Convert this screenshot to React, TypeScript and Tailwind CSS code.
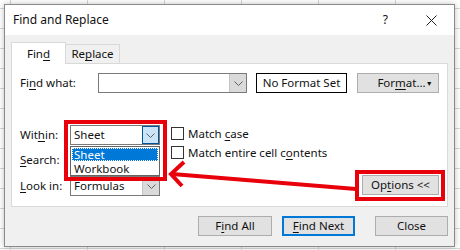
import React from 'react';

const U = ({ children }: { children: React.ReactNode }) => (
  <span className="underline underline-offset-[2px] decoration-1">{children}</span>
);

const Chevron = (): JSX.Element => (
  <svg width="9" height="5" viewBox="0 0 9 5" fill="none">
    <path d="M0.5 0.5 L4.5 4.5 L8.5 0.5" stroke="#606060" strokeWidth="1" />
  </svg>
);

const Combo = ({ value, width, active }: { value: string; width: string; active?: boolean }): JSX.Element => (
  <div className={`flex h-[20px] ${width} border border-[#7a7a7a] bg-white`}>
    <div className="flex-1 pl-[3px] leading-[18px]">{value}</div>
    {active ? (
      <div className="w-[17px] flex items-center justify-center bg-[#cce4f7] border border-[#005499]">
        <Chevron />
      </div>
    ) : (
      <div className="w-[17px] flex items-center justify-center bg-[#dadada] border-l border-[#c4c4c4]">
        <Chevron />
      </div>
    )}
  </div>
);

const Checkbox = ({ children, className }: { children: React.ReactNode; className?: string }): JSX.Element => (
  <div className={`flex items-center h-[13px] ${className}`}>
    <div className="w-[13px] h-[13px] border border-[#333333] bg-white" />
    <span className="ml-[4px] leading-none">{children}</span>
  </div>
);

const Button = ({ children, className }: { children: React.ReactNode; className?: string }): JSX.Element => (
  <div
    className={`h-[20px] flex items-center justify-center bg-[#e1e1e1] border border-[#adadad] leading-none ${className}`}
  >
    {children}
  </div>
);

const App = (): JSX.Element => (
  <div
    className="relative w-[460px] h-[250px] overflow-hidden bg-white pt-[4px] pl-[4px] text-[11.5px] text-[#111] font-['Noto_Sans',sans-serif] bg-[linear-gradient(to_right,#d6d6d6_1px,transparent_1px),linear-gradient(to_bottom,#d6d6d6_1px,transparent_1px)] bg-size-[77px_20px] bg-position-[10px_8px]"
  >
    <div className="w-[451px] h-[243px] border border-[#8a8a8a] bg-[#f0f0f0] shadow-[0_0_6px_rgba(0,0,0,0.25)]">
      <div className="h-[30px] bg-white flex items-center pl-[8px]">
        <span className="text-[12px]">Find and Replace</span>
        <span className="ml-auto mr-[38px] text-[12px]">?</span>
        <svg width="11" height="11" viewBox="0 0 11 11" className="mr-[17px]">
          <path d="M0.5 0.5 L10.5 10.5 M10.5 0.5 L0.5 10.5" stroke="#222" strokeWidth="1" />
        </svg>
      </div>

      <div className="flex items-end ml-[6px] mt-[7px]">
        <div className="relative z-10 -mb-px h-[22px] w-[55px] bg-white border border-b-0 border-[#d9d9d9] flex items-center justify-center">
          Fin<U>d</U>
        </div>
        <div className="h-[19px] w-[54px] bg-[#f0f0f0] border border-l-0 border-b-0 border-[#d9d9d9] flex items-center justify-center">
          Re<U>p</U>lace
        </div>
      </div>

      <div className="ml-[6px] w-[437px] h-[144px] bg-white border border-[#d9d9d9]">
        <div className="flex items-center mt-[9px] pl-[8px]">
          <div className="w-[78px]">
            Fi<U>n</U>d what:
          </div>
          <Combo value="" width="w-[149px]" />
          <div className="ml-[9px] w-[91px] h-[20px] border border-black flex items-center justify-center">
            No Format Set
          </div>
          <Button className="ml-[10px] w-[82px] relative">
            <span className="ml-[20px]">
              For<U>m</U>at...
            </span>
            <span className="ml-auto mr-[6px] text-[7px]">▼</span>
          </Button>
        </div>

        <div className="flex mt-[32px] pl-[8px]">
          <div className="flex flex-col">
            <div className="flex items-center h-[20px]">
              <div className="w-[50px]">
                Wit<U>h</U>in:
              </div>
              <Combo value="Sheet" width="w-[90px]" active />
            </div>
            <div className="flex items-center h-[20px] mt-[5px]">
              <div className="w-[50px]">
                <U>S</U>earch:
              </div>
              <Combo value="" width="w-[90px]" />
            </div>
            <div className="flex items-center h-[20px] mt-[6px]">
              <div className="w-[50px]">
                <U>L</U>ook in:
              </div>
              <Combo value="Formulas" width="w-[90px]" />
            </div>
          </div>

          <div className="ml-[11px] flex flex-col">
            <Checkbox className="mt-[2px]">
              Match <U>c</U>ase
            </Checkbox>
            <Checkbox className="mt-[6px]">
              Match entire cell c<U>o</U>ntents
            </Checkbox>
          </div>

          <Button className="ml-auto mr-[8px] self-end mb-[1px] w-[77px]">
            Op<U>t</U>ions &lt;&lt;
          </Button>
        </div>
      </div>

      <div className="ml-[6px] w-[437px] mt-[9px] flex justify-end">
        <Button className="w-[74px]">
          F<U>i</U>nd All
        </Button>
        <div className="ml-[10px] w-[73px] h-[20px] flex items-center justify-center bg-[#e1e1e1] border-2 border-[#0078d7] leading-none">
          <U>F</U>ind Next
        </div>
        <Button className="ml-[20px] w-[73px]">Close</Button>
      </div>
    </div>

    {/* open dropdown list of the Within combo */}
    <div className="absolute left-[70px] top-[146px] w-[90px] h-[30px] bg-white border border-[#646464] leading-[13px]">
      <div className="mx-px mt-px h-[13px] bg-[#0078d7] text-white pl-[2px] outline outline-1 outline-dotted outline-[#ffffff] -outline-offset-1">
        Sheet
      </div>
      <div className="pl-[3px] mt-px">Workbook</div>
    </div>

    {/* red annotations */}
    <div className="absolute left-[64px] top-[120px] w-[103px] h-[61px] border-[4px] border-[#e8000b]" />
    <div className="absolute left-[355px] top-[170px] w-[90px] h-[31px] border-[4px] border-[#e8000b]" />
    <svg className="absolute left-0 top-0 pointer-events-none" width="460" height="250">
      <path d="M172 174 L356 189" stroke="#e8000b" strokeWidth="4" />
      <path d="M184 162 L171 174 L182 186" stroke="#e8000b" strokeWidth="4" fill="none" />
    </svg>
  </div>
);

export default App;
